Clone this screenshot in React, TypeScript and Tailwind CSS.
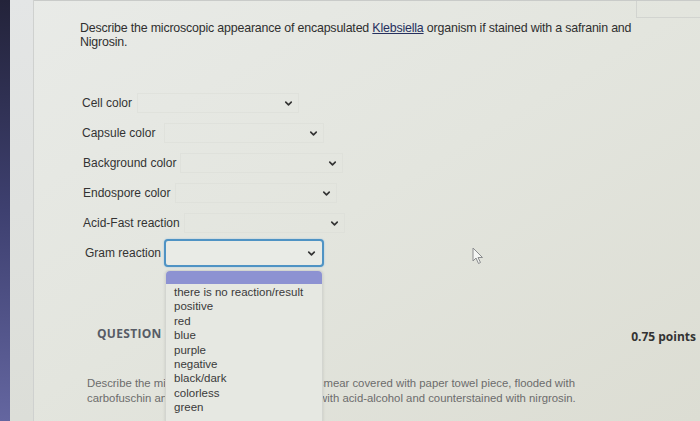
import { ChevronDown } from 'lucide-react';

const rows = [
  { label: 'Cell color', width: 'w-[162px]', gap: 'ml-[5px]' },
  { label: 'Capsule color', width: 'w-[160px]', gap: 'ml-[9px]' },
  { label: 'Background color', width: 'w-[163px]', gap: 'ml-[4px]' },
  { label: 'Endospore color', width: 'w-[162px]', gap: 'ml-[5px]' },
  { label: 'Acid-Fast reaction', width: 'w-[161px]', gap: 'ml-[4px]' },
];

const options = [
  'there is no reaction/result',
  'positive',
  'red',
  'blue',
  'purple',
  'negative',
  'black/dark',
  'colorless',
  'green',
];

function InlineSelect({ width, gap }: { width: string; gap: string }) {
  return (
    <div className={`${width} ${gap} h-[20px] flex items-center justify-end pr-[4px] border border-[#dadcd5]/50`}>
      <ChevronDown size={11} strokeWidth={3.5} className="text-[#333]" />
    </div>
  );
}

function Cursor() {
  return (
    <svg width="12" height="18" viewBox="0 0 12 18" className="absolute left-[438px] top-[247px]">
      <path d="M1 1 L1 14 L4 11 L6.5 16.5 L8.5 15.5 L6 10.5 L10.5 10.5 Z" fill="#f4f5f3" stroke="#8a8c8e" strokeWidth="1" strokeLinejoin="round" />
    </svg>
  );
}

export default function App() {
  return (
    <div
      className="relative flex w-[700px] h-[421px] overflow-hidden bg-gradient-to-br from-[#e9ebe8] via-[#e3e5de] to-[#dcddd3] text-[#333]"
      style={{ fontFamily: '"Liberation Sans", Arial, sans-serif' }}
    >
      {/* dark screen edge */}
      <div className="w-[10px] shrink-0 bg-gradient-to-b from-[#23233a] via-[#3e4070] to-[#6466a0]" />
      <div className="w-[24px] shrink-0 bg-gradient-to-b from-[#e4e6e6] to-[#dcded8] border-r border-[#cfd1cf]" />

      <div className="relative flex-1 flex flex-col">
        {/* top strip */}
        <div className="flex h-[18px] border-t border-[#c9cbc9]">
          <div className="flex-1" />
          <div className="w-[64px] border-l border-b border-[#d2d4d0]" />
        </div>

        <div className="pl-[46px] pr-[50px]">
          <p className="text-[12.4px] leading-[14px] tracking-[-0.18px] text-[#2f2f2f] mt-[3px]">
            Describe the microscopic appearance of encapsulated{' '}
            <span className="underline text-[#26305e]">Klebsiella</span> organism if stained with a safranin and Nigrosin.
          </p>

          <div className="mt-[39px] flex flex-col text-[12px]">
            {rows.map((r, i) => (
              <div key={r.label} className={`flex items-center h-[30px] ${i > 1 ? 'ml-[3px]' : 'ml-[2px]'}`}>
                <span className="text-[#333]">{r.label}</span>
                <InlineSelect width={r.width} gap={r.gap} />
              </div>
            ))}

            <div className="flex items-center h-[30px] ml-[5px]">
              <span className="text-[#333]">Gram reaction</span>
              <div className="relative">
                <div className="w-[160px] h-[28px] ml-[3px] rounded-[4px] border-2 border-[#4f93c4] bg-[#e9ebe6] flex items-center justify-end pr-[5px] shadow-[0_0_2px_#9cc3e0]">
                  <ChevronDown size={11} strokeWidth={3.5} className="text-[#333]" />
                </div>
                {/* open dropdown list */}
                <div className="absolute left-[4px] top-[31px] z-10 w-[158px] bg-[#e6e8e2] border border-[#d3d5d0] rounded-t-[4px] shadow-[0_1px_3px_rgba(0,0,0,0.12)]">
                  <div className="h-[13px] rounded-t-[4px] bg-[#8d92d2]" />
                  <ul className="pl-[8px] pt-[1px] pb-[6px] text-[11.5px] leading-[14.4px] text-[#3a3a3a]">
                    {options.map((o) => (
                      <li key={o}>{o}</li>
                    ))}
                  </ul>
                </div>
              </div>
            </div>
          </div>
        </div>

        <div className="mt-[53px] flex items-center justify-between pl-[63px] pr-[4px]">
          <span className="text-[12px] font-bold tracking-[0.3px] text-[#575c66]" style={{ fontFamily: '"Open Sans", sans-serif' }}>
            QUESTION
          </span>
          <span className="text-[12px] font-bold text-[#333] mt-[7px]" style={{ fontFamily: '"Open Sans", sans-serif' }}>
            0.75 points
          </span>
        </div>

        <p className="mt-[30px] ml-[53px] w-[494px] text-[11.35px] leading-[14.5px] text-[#6c6c6c]">
          Describe the microscopic appearance of your smear covered with paper towel piece, flooded with carbofuschin and steamed, then decolourized with acid-alcohol and counterstained with nirgrosin.
        </p>

        <Cursor />
      </div>
    </div>
  );
}
